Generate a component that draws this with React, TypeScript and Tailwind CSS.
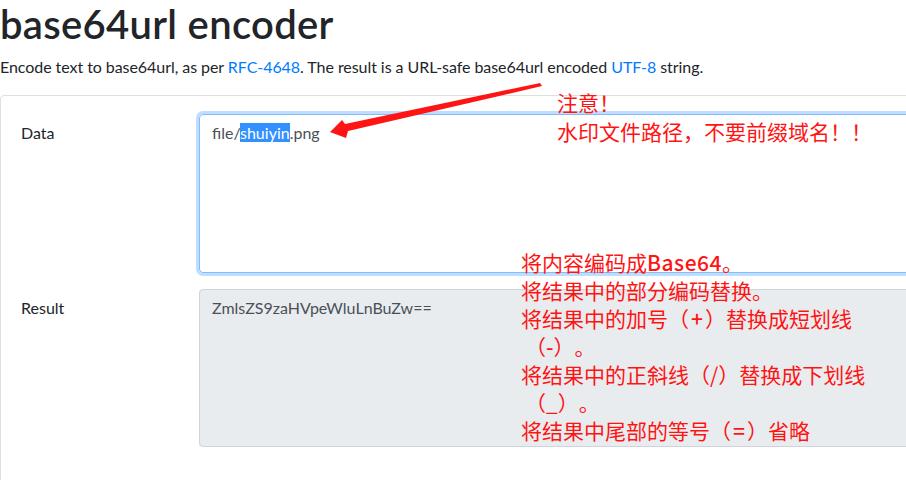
import React from "react";

export default function App() {
  const cjk = { fontFamily: '"Noto Sans CJK SC", "Noto Sans", sans-serif' } as const;
  return (
    <div
      className="relative w-[906px] h-[480px] overflow-hidden bg-white text-[#212529]"
      style={{ fontFamily: 'Lato, "Noto Sans", sans-serif' }}
    >
      <h1 className="m-0 text-[40px] font-semibold leading-[48px] tracking-[0.3px]">base64url encoder</h1>
      <p className="mt-[7px] mb-4 text-base leading-6 whitespace-nowrap tracking-[-0.06px]">
        Encode text to base64url, as per <span className="text-[#007bff]">RFC-4648</span>. The result is a URL-safe
        base64url encoded <span className="text-[#007bff]">UTF-8</span> string.
      </p>
      <div className="w-[1100px] h-[400px] border border-[#dfdfdf] rounded-[4px] px-5 pt-[18px]">
        <div className="flex mb-4">
          <div className="w-[178px] pt-[7px] leading-6 text-base">Data</div>
          <div className="flex-1 h-[159px] border border-[#80bdff] rounded-[4px] ring-[3px] ring-[#007bff]/25 px-3 py-1.5 leading-6 text-base text-[#495057]">
            file/<span className="bg-[#3390ff] text-white">shuiyin</span>.png
          </div>
        </div>
        <div className="flex">
          <div className="w-[178px] pt-[7px] leading-6 text-base">Result</div>
          <div className="flex-1 h-[158px] border border-[#ced4da] bg-[#e9ecef] rounded-[4px] px-3 py-1.5 leading-6 text-base text-[#495057]">
            ZmlsZS9zaHVpeWluLnBuZw==
          </div>
        </div>
      </div>

      <svg className="absolute left-0 top-0 pointer-events-none" width="906" height="480" viewBox="0 0 906 480">
        <polygon
          points="540,83 345,124 342,120 330,132 346,138 348,131 542,86"
          fill="#ff1414"
        />
      </svg>

      <div className="absolute left-[557px] top-[88px] text-[21px] leading-[29px] text-[#ff1414] whitespace-nowrap [text-spacing-trim:space-all]" style={cjk}>
        <div>注意！</div>
        <div>水印文件路径，不要前缀域名！！</div>
      </div>

      <div className="absolute left-[521px] top-[248px] text-[21px] leading-[28px] text-[#ff1414] whitespace-nowrap [text-spacing-trim:space-all]" style={cjk}>
        <div>将内容编码成<span className="font-medium tracking-[0.5px]">Base64</span>。</div>
        <div>将结果中的部分编码替换。</div>
        <div>将结果中的加号（<span className="font-medium px-[2px]">+</span>）替换成短划线</div>
        <div className="pl-[4px]">（<span className="font-medium">-</span>）。</div>
        <div>将结果中的正斜线（/）替换成下划线</div>
        <div className="pl-[4px]">（_）。</div>
        <div>将结果中尾部的等号（<span className="font-medium px-[2px]">=</span>）省略</div>
      </div>
    </div>
  );
}
